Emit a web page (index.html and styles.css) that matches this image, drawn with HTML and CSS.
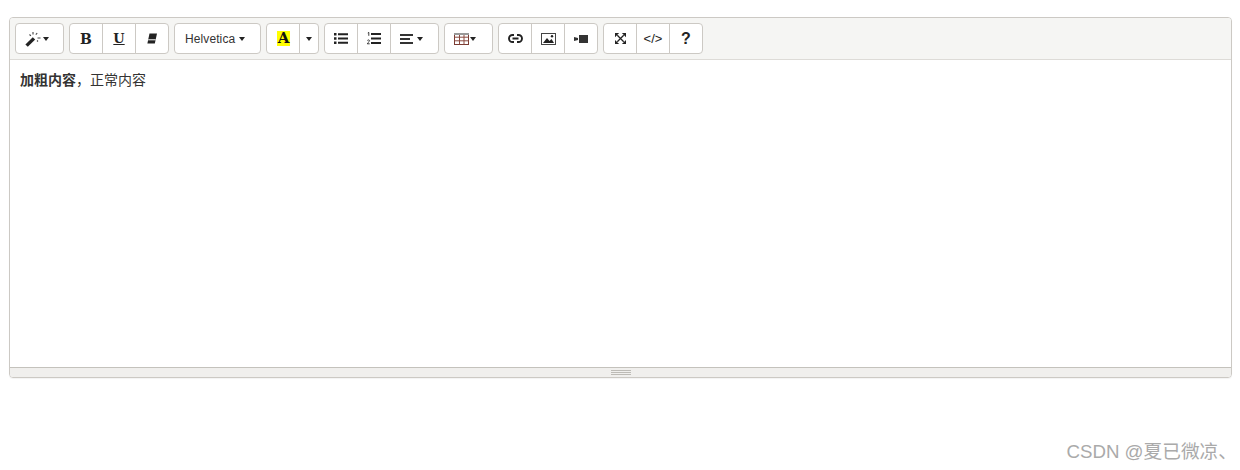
FILE: index.html
```html
<!DOCTYPE html>
<html lang="zh">
<head>
<meta charset="utf-8">
<title>Editor</title>
<link rel="stylesheet" href="styles.css">
</head>
<body>
<div class="editor">
  <div class="toolbar">
    <div class="group">
      <button class="btn w48 dd">
        <svg width="17" height="16" viewBox="0 0 17 16"><path d="M.4 13.400 7.800 6.200l2.400 2.400L2.800 15.800z" fill="#222"/><path d="M8 1v2.500M12.200 2 10.800 3.600M15.500 7h-3M4.500 3.500l1.400 1.400M13 10.500 12 9.500" stroke="#444" stroke-width="1.100" fill="none"/></svg><i class="caret c-tight"></i>
      </button>
    </div>
    <div class="group">
      <button class="btn w33"><span class="serif">B</span></button>
      <button class="btn w33"><span class="serif ul">U</span></button>
      <button class="btn w33"><svg width="12" height="11" viewBox="0 0 12 11"><path d="M3.500.6h7.500L8.800 10.400H1.400z" fill="#222"/><path d="M2.200 6.800h7.500" stroke="#fff" stroke-width="1"/></svg></button>
    </div>
    <div class="group">
      <button class="btn w87 dd pad10"><span class="font-name">Helvetica</span><i class="caret"></i></button>
    </div>
    <div class="group">
      <button class="btn w33"><span class="hl">A</span></button>
      <button class="btn w20"><i class="caret c-flush"></i></button>
    </div>
    <div class="group">
      <button class="btn w33"><svg width="14" height="11" viewBox="0 0 14 11"><path d="M0 0h2.500v2.500H0zM0 4.250h2.500v2.500H0zM0 8.500h2.500V11H0zM4 .2h10v2H4zM4 4.500h10v2H4zM4 8.800h10v2H4z" fill="#222"/></svg></button>
      <button class="btn w33"><svg width="14" height="13" viewBox="0 0 14 13"><path d="M4 1h10v2H4zM4 5.500h10v2H4zM4 10h10v2H4z" fill="#222"/><path d="M.8 1 1.800.4v3.400M.3 8.600c.4-1 2.200-.9 2.200.2 0 1-1.800 1.500-2.200 3h2.400" stroke="#222" stroke-width=".9" fill="none"/></svg></button>
      <button class="btn w48 dd"><svg width="13" height="10" viewBox="0 0 13 10"><path d="M0 0h13v2H0zM0 4h10v2H0zM0 8h13v2H0z" fill="#333"/></svg><i class="caret"></i></button>
    </div>
    <div class="group">
      <button class="btn w48 dd"><svg width="15" height="12" viewBox="0 0 15 12"><rect x=".5" y=".5" width="14" height="11" fill="none" stroke="#7a3b32"/><path d="M.5 4.200h14M.5 7.800h14M5.500.5v11M10 .5v11" stroke="#8a4a40" fill="none"/><path d="M0 0h15v2H0z" fill="#999"/></svg><i class="caret c-tight"></i></button>
    </div>
    <div class="group">
      <button class="btn w33"><svg width="15" height="9" viewBox="0 0 15 9"><path d="M6 1H4.500a3.500 3.500 0 0 0 0 7H6M9 1h1.500a3.500 3.500 0 0 1 0 7H9M4.500 4.500h6" fill="none" stroke="#222" stroke-width="1.900"/></svg></button>
      <button class="btn w33"><svg width="15" height="12" viewBox="0 0 15 12"><rect x=".5" y=".5" width="14" height="11" fill="#fff" stroke="#444"/><path d="M2 10 6 5l2.500 3L10.500 6 13 10z" fill="#222"/><circle cx="11" cy="3.200" r="1.200" fill="#222"/></svg></button>
      <button class="btn w33"><svg width="14" height="8" viewBox="0 0 14 8"><path d="M5 0h9v8H5zM0 2l4 1v2L0 6z" fill="#333"/></svg></button>
    </div>
    <div class="group">
      <button class="btn w33"><svg width="11" height="11" viewBox="0 0 12 12"><path d="M2.500 2.500 9.500 9.500M9.500 2.500 2.500 9.500" stroke="#222" stroke-width="1.400"/><path d="M0 0h4.500L0 4.500zM12 0H7.500L12 4.500zM0 12h4.500L0 7.500zM12 12H7.500L12 7.500z" fill="#222"/></svg></button>
      <button class="btn w33"><span class="code">&lt;/&gt;</span></button>
      <button class="btn w33"><span class="help">?</span></button>
    </div>
  </div>
  <div class="content"><p class="para"><b>加粗内容</b>，正常内容</p></div>
  <div class="resizer"><i class="grip"></i></div>
</div>
<div class="watermark">CSDN @夏已微凉、</div>
</body>
</html>
```
FILE: styles.css
```css
* { box-sizing: border-box; }
html, body { margin: 0; height: 470px; overflow: hidden; background: #fff; }
body {
  padding: 17px 8px 0 9px;
  position: relative;
  font-family: "Liberation Sans", "Noto Sans CJK SC", sans-serif;
  color: #333;
}
.editor {
  height: 361px;
  border: 1px solid #ccc9c4;
  border-radius: 4px;
  display: flex;
  flex-direction: column;
  box-shadow: 0 1px 1px rgba(0,0,0,.05);
}
.toolbar {
  height: 42px;
  flex: none;
  display: flex;
  gap: 5px;
  padding: 5px 5px 0;
  background: #f5f5f3;
  border-bottom: 1px solid #dddbd7;
  border-radius: 3px 3px 0 0;
}
.group { display: flex; height: 31px; }
.btn {
  height: 31px;
  padding: 0;
  margin: 0 0 0 -1px;
  background: #fff;
  border: 1px solid #ccc9c4;
  display: flex;
  align-items: center;
  justify-content: center;
  font-family: inherit;
  color: #222;
}
.btn:first-child { margin-left: 0; border-radius: 4px 0 0 4px; }
.btn:last-child { border-radius: 0 4px 4px 0; }
.btn:only-child { border-radius: 4px; }
.dd { justify-content: flex-start; padding-left: 9px; }
.pad10 { padding-left: 10px; }
.w20 { width: 20px; }
.w33 { width: 34px; }
.w48 { width: 49px; }
.w87 { width: 87px; }
.caret {
  width: 0;
  height: 0;
  margin-left: 4px;
  border-left: 3.500px solid transparent;
  border-right: 3.500px solid transparent;
  border-top: 4px solid #222;
}
.c-tight { margin-left: 1px; }
.c-flush { margin-left: 0; }
.serif { font: bold 14px "DejaVu Serif", serif; color: #222; }
.ul { text-decoration: underline; font-size: 13px; }
.font-name { font-size: 12px; letter-spacing: .1px; color: #333; }
.hl {
  width: 13px;
  height: 15px;
  margin-left: 1px;
  background: #ff0;
  color: #111;
  font: bold 15px/15px "DejaVu Serif", serif;
  text-align: center;
}
.code { font: 13px "Liberation Sans", sans-serif; color: #222; }
.help { font: bold 16px "Liberation Sans", sans-serif; color: #222; }
.content { flex: 1; padding: 10px; background: #fff; }
.para { margin: 0; font-size: 14px; line-height: 20px; color: #333; }
.resizer {
  height: 10px;
  flex: none;
  background: #f0efed;
  border-top: 1px solid #c4c2bc;
  border-radius: 0 0 3px 3px;
  display: flex;
  align-items: center;
  justify-content: center;
}
.grip {
  width: 20px;
  height: 5px;
  border-top: 1px solid #bdbbb6;
  border-bottom: 1px solid #bdbbb6;
  background: linear-gradient(#f0efed 1px, #bdbbb6 1px, #bdbbb6 2px, #f0efed 2px);
}
.watermark {
  position: absolute;
  right: 3px;
  top: 439px;
  font-size: 18.7px;
  line-height: 26px;
  color: #aaa;
  white-space: nowrap;
}
```
